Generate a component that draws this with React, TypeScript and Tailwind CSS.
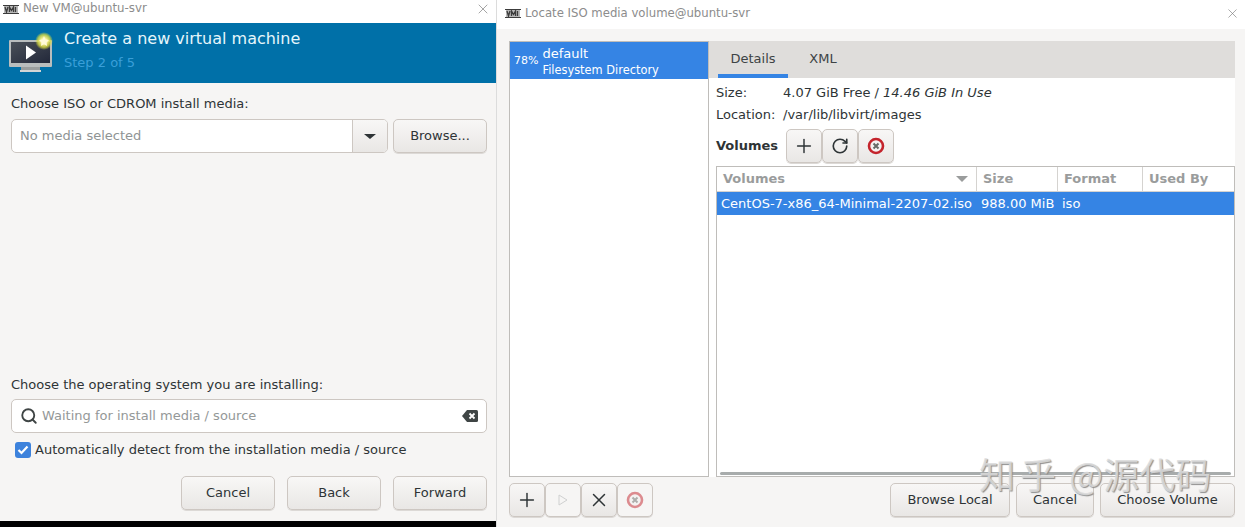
import React from 'react';
import { Plus, RotateCw, Search, X } from 'lucide-react';

const btn = 'flex items-center justify-center rounded-[5px] border border-[#cdc7c2] bg-gradient-to-b from-[#f8f7f6] to-[#e9e7e5] text-[13px] text-[#2e3436] shadow-[0_1px_0_#dcd9d6]';

const VmGlyph = () => (
  <svg width="16" height="9" viewBox="0 0 16 9" className="shrink-0">
    <rect x="1" y="0" width="14" height="9" fill="#b8b8b8" />
    <path d="M0 .5h16M0 8.500h16" stroke="#3c3c3c" strokeWidth="1" />
    <path d="M2 2l1.500 5L5 2M6.500 7V2l2 3.500 2-3.500v5M12.500 2v5" stroke="#3c3c3c" strokeWidth="1.300" fill="none" />
  </svg>
);

const StopIcon = ({ faded }: { faded?: boolean }) => (
  <svg width="18" height="18" viewBox="0 0 18 18" className={faded ? 'opacity-50' : ''}>
    <circle cx="9" cy="9" r="7" fill="#f4f1f0" stroke="#c4242c" strokeWidth="2.600" />
    <path d="M6.500 6.500l5 5M11.500 6.500l-5 5" stroke="#666a66" strokeWidth="2" />
  </svg>
);

const MonitorIcon = () => (
  <svg width="46" height="44" viewBox="0 0 46 44" className="shrink-0">
    <defs>
      <radialGradient id="glow">
        <stop offset="0.300" stopColor="#fff7a0" />
        <stop offset="0.700" stopColor="#d8dc40" stopOpacity="0.800" />
        <stop offset="1" stopColor="#d8dc40" stopOpacity="0" />
      </radialGradient>
      <linearGradient id="screen" x1="0" y1="0" x2="1" y2="1">
        <stop offset="0" stopColor="#4a5058" />
        <stop offset="1" stopColor="#22283a" />
      </linearGradient>
    </defs>
    <rect x="1" y="9" width="43" height="27" rx="1" fill="#b9bdbd" />
    <rect x="3" y="11" width="39" height="21" fill="url(#screen)" />
    <rect x="13" y="36" width="19" height="3" fill="#9a9e9e" />
    <rect x="12" y="39" width="21" height="2" fill="#d2d5d5" />
    <path d="M18 14.500l10 7-10 7z" fill="#fff" />
    <circle cx="36" cy="10" r="9" fill="url(#glow)" />
    <path d="M36 5l1.500 3.500 3.500.5-2.500 2.500.6 3.500-3.100-1.700-3.100 1.700.6-3.500L31 9l3.500-.5z" fill="#fffbd8" />
  </svg>
);

export default function App() {
  return (
    <div className="relative flex h-[527px] w-[1245px] overflow-hidden bg-white font-['DejaVu_Sans',sans-serif] text-[13px] text-[#2e3436]">
      {/* New VM window */}
      <div className="flex h-full w-[497px] shrink-0 flex-col border-r border-[#dcdcdc] bg-black">
        <div className="flex h-[23px] shrink-0 items-center gap-[4px] bg-white pb-[5px] pl-[3px] pr-[5px] text-[11.800px] text-[#8c8c8c]">
          <VmGlyph />
          <span className="flex-1">New VM@ubuntu-svr</span>
          <X size={16} strokeWidth={1} className="text-[#777]" />
        </div>
        <div className="flex h-[60px] shrink-0 items-center gap-[10px] bg-[#0070a8] pl-[8px]">
          <MonitorIcon />
          <div className="mb-[7px] flex flex-col gap-[6px]">
            <div className="text-[16px] leading-[20px] text-[#e6f6fb]">Create a new virtual machine</div>
            <div className="text-[13px] leading-[16px] text-[#3a9fd8]">Step 2 of 5</div>
          </div>
        </div>
        <div className="flex h-[438px] shrink-0 flex-col bg-[#f6f5f4] pb-[11px] pl-[11px] pr-[9px] pt-[13px]">
          <div className="leading-[16px]">Choose ISO or CDROM install media:</div>
          <div className="mt-[7px] flex h-[34px] gap-[5px]">
            <div className="flex flex-1 overflow-hidden rounded-[5px] border border-[#cdc7c2] bg-white">
              <div className="flex flex-1 items-center pl-[8px] text-[#8f9494]">No media selected</div>
              <div className="flex w-[35px] items-center justify-center border-l border-[#cdc7c2] bg-gradient-to-b from-[#f8f7f6] to-[#e9e7e5]">
                <div className="h-0 w-0 border-x-[6px] border-t-[5px] border-x-transparent border-t-[#2e3436]" />
              </div>
            </div>
            <div className={`${btn} w-[94px]`}>Browse...</div>
          </div>
          <div className="mt-auto leading-[16px]">Choose the operating system you are installing:</div>
          <div className="mt-[6px] flex h-[34px] items-center rounded-[5px] border border-[#cdc7c2] bg-white pl-[8px] pr-[8px]">
            <Search size={18} strokeWidth={2.500} className="text-[#3f4545]" />
            <span className="ml-[4px] flex-1 text-[#949898]">Waiting for install media / source</span>
            <svg width="16" height="12" viewBox="0 0 16 12">
              <path d="M5 0h9.500A1.500 1.500 0 0 1 16 1.500v9a1.500 1.500 0 0 1-1.500 1.500H5L0 6z" fill="#3f4545" />
              <path d="M7.500 3.500l5 5M12.500 3.500l-5 5" stroke="#fff" strokeWidth="1.800" />
            </svg>
          </div>
          <div className="ml-[4px] mt-[8px] flex h-[18px] items-center gap-[4px]">
            <svg width="16" height="16" viewBox="0 0 16 16" className="shrink-0">
              <rect width="16" height="16" rx="3" fill="#3d82dc" />
              <path d="M3.500 8l3 3 6-6.500" stroke="#fff" strokeWidth="2.200" fill="none" />
            </svg>
            <span>Automatically detect from the installation media / source</span>
          </div>
          <div className="mt-[17px] flex h-[34px] justify-end gap-[12px]">
            <div className={`${btn} w-[94px]`}>Cancel</div>
            <div className={`${btn} w-[94px]`}>Back</div>
            <div className={`${btn} w-[94px]`}>Forward</div>
          </div>
        </div>
      </div>

      {/* Locate ISO window */}
      <div className="flex h-full flex-1 flex-col bg-[#f6f5f4]">
        <div className="flex h-[29px] shrink-0 items-center gap-[4px] bg-white pb-[2px] pl-[8px] pr-[5px] text-[11.700px] text-[#8c8c8c]">
          <VmGlyph />
          <span className="flex-1">Locate ISO media volume@ubuntu-svr</span>
          <X size={15} strokeWidth={1} className="text-[#777]" />
        </div>
        <div className="flex flex-1 flex-col pb-[10px] pl-[12px] pr-[10px] pt-[12px]">
          <div className="flex h-[436px]">
            <div className="w-[200px] shrink-0 border border-[#bfbdba] bg-white">
              <div className="flex h-[37px] items-center gap-[4px] bg-[#3584e4] pl-[4px] pt-[2px] text-white">
                <span className="text-[11px]">78%</span>
                <div className="flex flex-col gap-[2px]">
                  <span className="text-[13px] leading-[15px]">default</span>
                  <span className="text-[11.400px] leading-[14px]">Filesystem Directory</span>
                </div>
              </div>
            </div>
            <div className="flex flex-1 flex-col">
              <div className="flex h-[37px] shrink-0 bg-[#dfdddb]">
                <div className="ml-[9px] flex w-[70px] items-center justify-center border-b-[4px] border-[#3584e4] pt-[2px] text-[13px] text-[#3d4345]">Details</div>
                <div className="ml-[6px] flex w-[58px] items-center justify-center pb-[2px] text-[13px] text-[#3d4345]">XML</div>
              </div>
              <div className="flex flex-1 flex-col bg-white pl-[7px]">
                <div className="mt-[6px] flex h-[18px] items-center">
                  <span className="w-[67px]">Size:</span>
                  <span>4.07 GiB Free / <i>14.46 GiB In Use</i></span>
                </div>
                <div className="mt-[4px] flex h-[18px] items-center">
                  <span className="w-[67px]">Location:</span>
                  <span>/var/lib/libvirt/images</span>
                </div>
                <div className="mt-[5px] flex h-[34px] items-center">
                  <span className="w-[70px] font-bold">Volumes</span>
                  <div className={`${btn} h-full w-[36px]`}><Plus size={22} strokeWidth={1.600} /></div>
                  <div className={`${btn} h-full w-[36px]`}><RotateCw size={18} strokeWidth={2.200} /></div>
                  <div className={`${btn} h-full w-[36px]`}><StopIcon /></div>
                </div>
                <div className="mt-[3px] flex flex-1 flex-col border border-[#bfbdba] bg-white">
                  <div className="grid h-[25px] shrink-0 grid-cols-[259px_81px_85px_1fr] border-b border-[#d5d3d0] font-bold text-[#9a9c9c]">
                    <div className="flex items-center justify-between pl-[6px] pr-[8px]">
                      Volumes
                      <div className="h-0 w-0 border-x-[6px] border-t-[6px] border-x-transparent border-t-[#9a9c9c]" />
                    </div>
                    <div className="flex items-center border-l border-[#d5d3d0] pl-[6px]">Size</div>
                    <div className="flex items-center border-l border-[#d5d3d0] pl-[6px]">Format</div>
                    <div className="flex items-center border-l border-[#d5d3d0] pl-[6px]">Used By</div>
                  </div>
                  <div className="grid h-[23px] shrink-0 grid-cols-[259px_81px_85px_1fr] items-center bg-[#3584e4] text-white">
                    <div className="whitespace-nowrap pl-[4px]">CentOS-7-x86_64-Minimal-2207-02.iso</div>
                    <div className="pl-[5px]">988.00 MiB</div>
                    <div className="pl-[5px]">iso</div>
                  </div>
                  <div className="flex-1" />
                  <div className="mx-[3px] mb-[1px] h-[3px] rounded-full bg-[#a8acac]" />
                </div>
              </div>
            </div>
          </div>
          <div className="mt-[6px] flex h-[34px] items-center">
            <div className={`${btn} h-full w-[36px]`}><Plus size={22} strokeWidth={1.600} /></div>
            <div className={`${btn} h-full w-[36px] !bg-none bg-[#f6f5f4]`}>
              <svg width="12" height="14" viewBox="0 0 12 14"><path d="M2 2l8 5-8 5z" fill="none" stroke="#cfd0d0" /></svg>
            </div>
            <div className={`${btn} h-full w-[36px]`}><X size={22} strokeWidth={1.600} /></div>
            <div className={`${btn} h-full w-[36px] !bg-none bg-[#f6f5f4]`}><StopIcon faded /></div>
            <div className={`${btn} ml-auto h-full w-[120px]`}>Browse Local</div>
            <div className={`${btn} ml-[6px] h-full w-[78px]`}>Cancel</div>
            <div className={`${btn} ml-[6px] h-full w-[135px]`}>Choose Volume</div>
          </div>
        </div>
      </div>

      {/* Watermark */}
      <div className="pointer-events-none absolute left-[979px] top-[451px] whitespace-pre font-['Noto_Sans_CJK_SC',sans-serif] text-[36px] leading-[44px] text-[#dcdcdc]/85 [text-shadow:1px_1px_1px_#8f8f8f]">
        <span className="tracking-[5px]">知乎</span> @源代码
      </div>
    </div>
  );
}
